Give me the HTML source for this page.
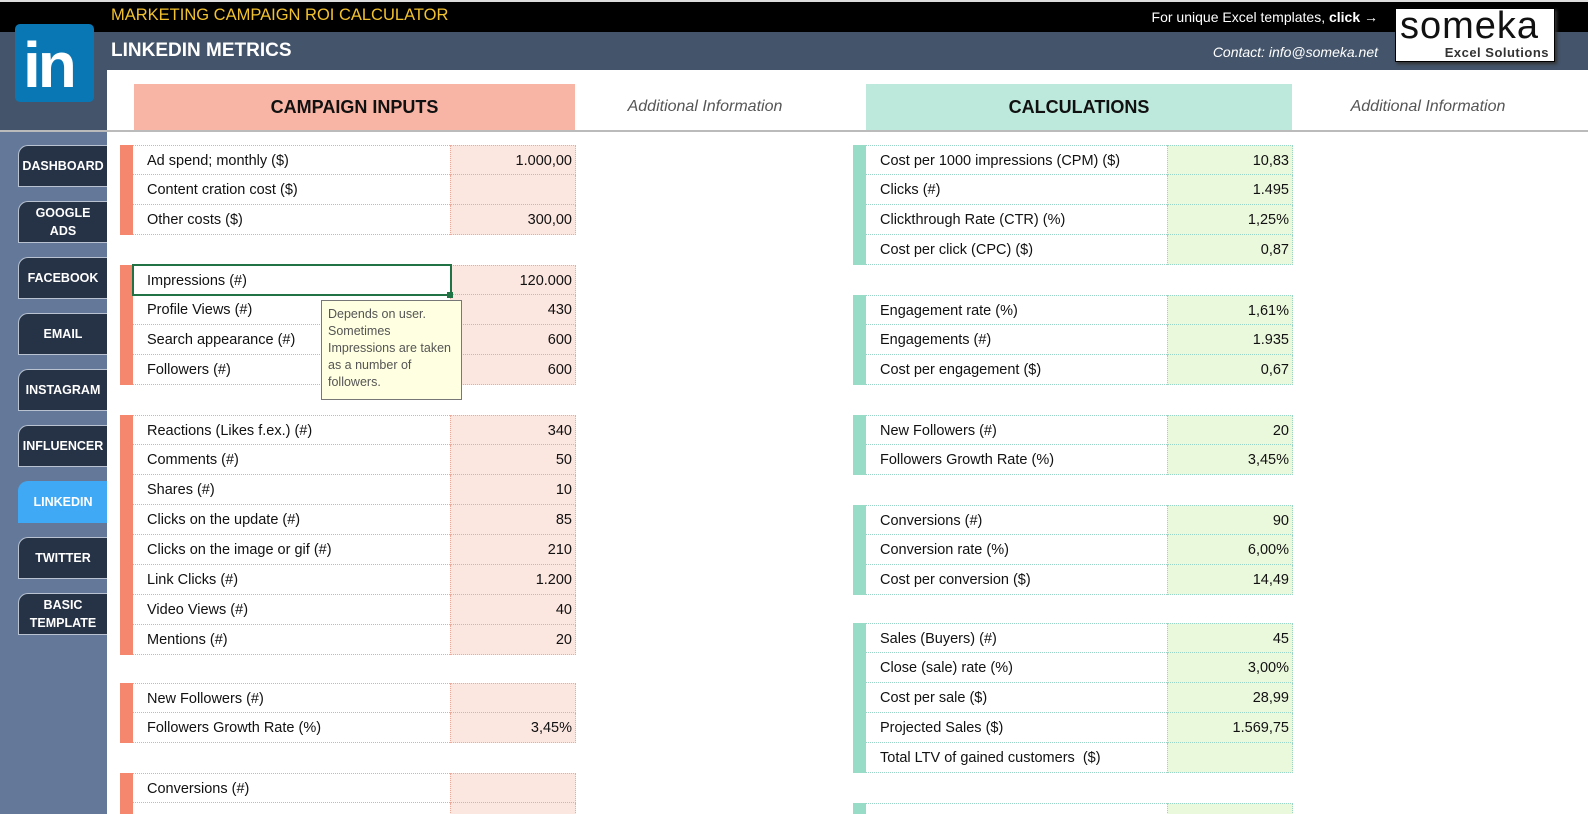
<!DOCTYPE html>
<html><head><meta charset="utf-8"><style>
*{margin:0;padding:0;box-sizing:border-box}
html,body{width:1588px;height:814px;overflow:hidden;background:#fff}
#wrap{position:relative;width:1588px;height:814px;overflow:hidden;font-family:"Liberation Sans",sans-serif;color:#111}
.abs{position:absolute}
#top{left:0;top:0;width:1588px;height:32px;background:#000;border-top:2px solid #ddd}
#hdr{left:0;top:32px;width:1588px;height:38px;background:#44546a}
#side1{left:0;top:32px;width:107px;height:98px;background:#44546a}
#side2{left:0;top:130px;width:107px;height:684px;background:#64799a}
#hline{left:0;top:130px;width:1588px;height:2px;background:#bbb}
.btn{position:absolute;left:18px;width:89px;height:42px;background:#263246;color:#fff;font-size:12.5px;font-weight:bold;display:flex;align-items:center;justify-content:center;text-align:center;line-height:18px;border-radius:10px 0 0 0;border:1px solid #b8c2d0;border-right:none}
.btn.on{background:#3fa9f5;border-color:#3fa9f5}
.row{position:absolute;height:30px;font-size:14.5px;line-height:30px}
.lab{position:absolute;top:0;height:30px;padding-left:14px;border-bottom:1px dotted}
.val{position:absolute;top:0;height:30px;text-align:right;padding-right:3px;border-bottom:1px dotted;border-left:1px dotted;border-right:1px dotted}
.stripe{position:absolute}
</style></head><body><div id="wrap">
<div id="top" class="abs"></div>
<div id="hdr" class="abs"></div>
<div id="side1" class="abs"></div>
<div id="side2" class="abs"></div>
<div id="hline" class="abs"></div>
<div class="abs" style="left:111px;top:6px;color:#f2c12e;font-size:16.5px">MARKETING CAMPAIGN ROI CALCULATOR</div>
<div class="abs" style="left:111px;top:40px;color:#fff;font-size:19px;font-weight:bold">LINKEDIN METRICS</div>
<div class="abs" style="left:15px;top:24px;width:79px;height:78px;background:#0a77b5;border-radius:5px"></div>
<div class="abs" style="left:23px;top:30px;color:#fff;font-size:64px;font-weight:bold;letter-spacing:-3px;line-height:70px">in</div>
<div class="abs" style="left:1100px;top:9px;width:278px;text-align:right;color:#fff;font-size:14px">For unique Excel templates, <b>click →</b></div>
<div class="abs" style="left:1100px;top:44px;width:278px;text-align:right;color:#fff;font-size:14px;font-style:italic">Contact: info@someka.net</div>
<div class="abs" style="left:1395px;top:8px;width:160px;height:54px;background:#fff;border:1px solid #000;box-shadow:2px 2px 3px #333">
<div style="position:absolute;left:4px;top:-4px;font-size:38px;letter-spacing:1px;color:#111">someka</div>
<div style="position:absolute;right:5px;top:36px;font-size:13px;font-weight:bold;color:#333;letter-spacing:.5px">Excel Solutions</div></div>
<div class="abs" style="left:134px;top:84px;width:441px;height:46px;background:#f8b5a5;text-align:center;line-height:46px;font-size:18px;font-weight:bold">CAMPAIGN INPUTS</div>
<div class="abs" style="left:866px;top:84px;width:426px;height:46px;background:#bde9dc;text-align:center;line-height:46px;font-size:18px;font-weight:bold">CALCULATIONS</div>
<div class="abs" style="left:580px;top:98px;width:250px;text-align:center;font-size:16px;font-style:italic;color:#555">Additional Information</div>
<div class="abs" style="left:1300px;top:98px;width:256px;text-align:center;font-size:16px;font-style:italic;color:#555">Additional Information</div>

<div class="btn" style="top:145px">DASHBOARD</div>
<div class="btn" style="top:201px">GOOGLE<br>ADS</div>
<div class="btn" style="top:257px">FACEBOOK</div>
<div class="btn" style="top:313px">EMAIL</div>
<div class="btn" style="top:369px">INSTAGRAM</div>
<div class="btn" style="top:425px">INFLUENCER</div>
<div class="btn on" style="top:481px">LINKEDIN</div>
<div class="btn" style="top:537px">TWITTER</div>
<div class="btn" style="top:593px">BASIC<br>TEMPLATE</div>

<div id="L"></div>
<script>
function block(x,sw,lw,vw,y,rows,col,bd,vbg){
 let h='';
 h+=`<div class="stripe" style="left:${x}px;top:${y}px;width:${sw}px;height:${rows.length*30}px;background:${col}"></div>`;
 rows.forEach((r,i)=>{
  h+=`<div class="row" style="left:${x+sw}px;top:${y+i*30}px;width:${lw+vw}px">
  <div class="lab" style="left:0;width:${lw}px;border-color:${bd};${i==0?'border-top:1px dotted '+bd:''}">${r[0]}</div>
  <div class="val" style="left:${lw}px;width:${vw}px;background:${vbg};border-color:${bd};${i==0?'border-top:1px dotted '+bd:''}">${r[1]}</div></div>`;
 });
 return h;
}
let L='';
const P=['#f4876d','#f0a898','#fce6e0'];
L+=block(120,13,317,126,145,[['Ad spend; monthly ($)','1.000,00'],['Content cration cost ($)',''],['Other costs ($)','300,00']],...P);
L+=block(120,13,317,126,265,[['Impressions (#)','120.000'],['Profile Views (#)','430'],['Search appearance (#)','600'],['Followers (#)','600']],...P);
L+=block(120,13,317,126,415,[['Reactions (Likes f.ex.) (#)','340'],['Comments (#)','50'],['Shares (#)','10'],['Clicks on the update (#)','85'],['Clicks on the image or gif (#)','210'],['Link Clicks (#)','1.200'],['Video Views (#)','40'],['Mentions (#)','20']],...P);
L+=block(120,13,317,126,683,[['New Followers (#)',''],['Followers Growth Rate (%)','3,45%']],...P);
L+=block(120,13,317,126,773,[['Conversions (#)',''],['','']],...P);
const T=['#98dcc8','#9ad5c8','#eaf8dc'];
L+=block(853,13,301,126,145,[['Cost per 1000 impressions (CPM) ($)','10,83'],['Clicks (#)','1.495'],['Clickthrough Rate (CTR) (%)','1,25%'],['Cost per click (CPC) ($)','0,87']],...T);
L+=block(853,13,301,126,295,[['Engagement rate (%)','1,61%'],['Engagements (#)','1.935'],['Cost per engagement ($)','0,67']],...T);
L+=block(853,13,301,126,415,[['New Followers (#)','20'],['Followers Growth Rate (%)','3,45%']],...T);
L+=block(853,13,301,126,505,[['Conversions (#)','90'],['Conversion rate (%)','6,00%'],['Cost per conversion ($)','14,49']],...T);
L+=block(853,13,301,126,623,[['Sales (Buyers) (#)','45'],['Close (sale) rate (%)','3,00%'],['Cost per sale ($)','28,99'],['Projected Sales ($)','1.569,75'],['Total LTV of gained customers&nbsp; ($)','']],...T);
L+=block(853,13,301,126,803,[['','']],...T);
document.getElementById('L').innerHTML=L;
</script>
<div class="abs" style="left:132px;top:264px;width:320px;height:32px;border:2px solid #217346"></div>
<div class="abs" style="left:447px;top:292px;width:6px;height:6px;background:#217346"></div>
<div class="abs" style="left:321px;top:300px;width:141px;height:100px;background:#ffffe1;border:1px solid #777;font-size:12.5px;line-height:17px;color:#555;padding:5px 6px">Depends on user. Sometimes Impressions are taken as a number of followers.</div>
</div></body></html>
